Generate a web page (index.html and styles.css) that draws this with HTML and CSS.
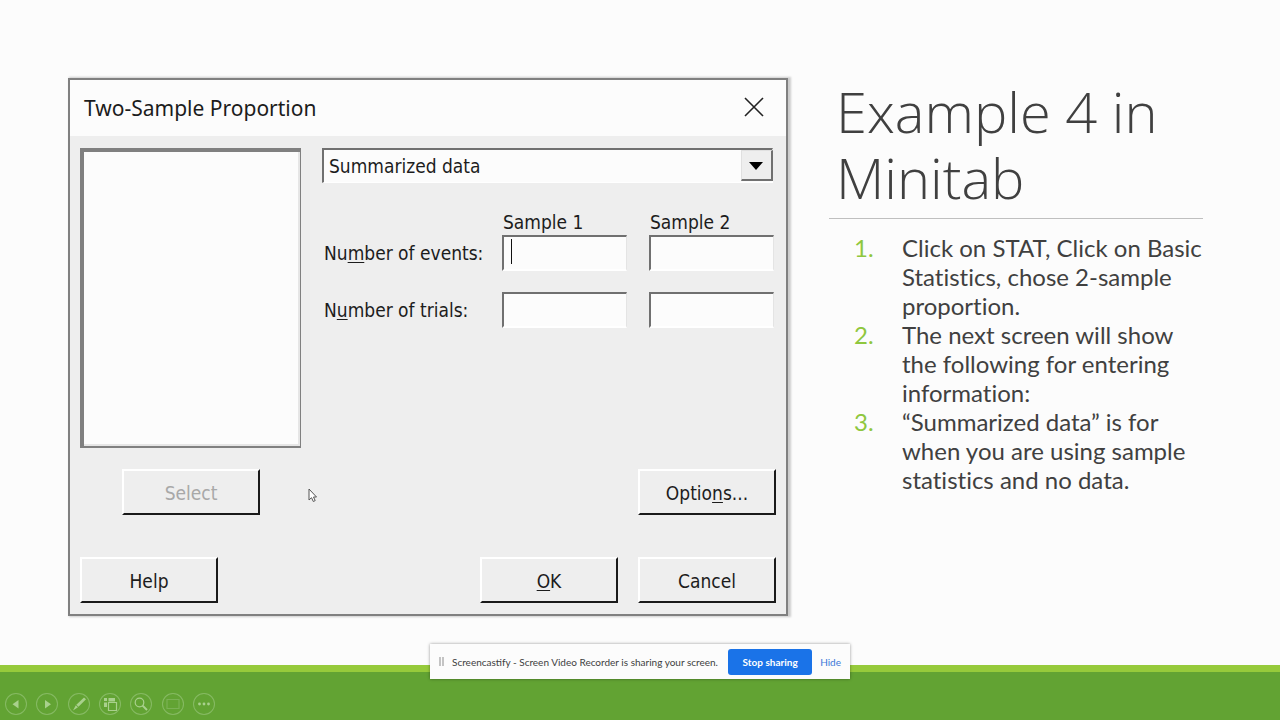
FILE: index.html
```html
<!DOCTYPE html>
<html lang="en">
<head>
<meta charset="utf-8">
<meta name="viewport" content="width=device-width, initial-scale=1">
<title>Example 4 in Minitab</title>
<link rel="stylesheet" href="styles.css">
</head>
<body>
<main class="slide">
  <section class="dialog" aria-labelledby="dialog-title">
    <header class="titlebar">
      <h2 class="dialog-title" id="dialog-title">Two-Sample Proportion</h2>
      <button class="close" type="button" aria-label="Close">
        <svg width="20" height="20" viewBox="0 0 20 20" fill="none" stroke="#222" stroke-width="1.6"><path d="M1 1 19 19M19 1 1 19"/></svg>
      </button>
    </header>
    <form class="dialog-body">
      <div class="fields">
        <div class="listbox" role="listbox" aria-label="Columns"></div>
        <div class="settings">
          <div class="combo">
            <select class="combo-select" aria-label="Data format"><option>Summarized data</option></select>
            <span class="combo-arrow"><svg width="14" height="8" viewBox="0 0 14 8"><path d="M0 0H14L7 8Z" fill="#000"/></svg></span>
          </div>
          <div class="samples">
            <span></span>
            <span class="head" id="s1">Sample 1</span>
            <span class="head" id="s2">Sample 2</span>
            <label for="events1" id="events">Nu<u>m</u>ber of events:</label>
            <span class="cell"><input class="box" id="events1" type="text" aria-labelledby="events s1"><i class="caret"></i></span>
            <input class="box" type="text" aria-labelledby="events s2">
            <label for="trials1" id="trials">N<u>u</u>mber of trials:</label>
            <input class="box" id="trials1" type="text" aria-labelledby="trials s1">
            <input class="box" type="text" aria-labelledby="trials s2">
          </div>
        </div>
      </div>
      <div class="row row-options">
        <button class="btn" type="button" disabled>Select</button>
        <button class="btn push" type="button">Optio<u>n</u>s...</button>
      </div>
      <div class="row">
        <button class="btn" type="button">Help</button>
        <button class="btn push" type="button"><u>O</u>K</button>
        <button class="btn" type="button">Cancel</button>
      </div>
    </form>
    <svg class="pointer" width="10" height="15" viewBox="0 0 10 15"><path d="M1 1V12L3.500 9.700 5.300 13.500 7.200 12.600 5.500 9H8.500Z" fill="#fff" stroke="#555" stroke-width="1"/></svg>
  </section>
  <section class="notes">
    <h1 class="heading">Example 4 in Minitab</h1>
    <ol class="steps">
      <li>Click on STAT, Click on Basic Statistics, chose 2-sample proportion.</li>
      <li>The next screen will show the following for entering information:</li>
      <li>“Summarized data” is for when you are using sample statistics and no data.</li>
    </ol>
  </section>
</main>
<footer class="band">
  <nav class="controls" aria-label="Slide show">
    <button class="ctl" type="button" aria-label="Previous"><svg viewBox="0 0 22 22"><path class="solid" d="M13.500 7V15.500L7.500 11.200Z"/></svg></button>
    <button class="ctl" type="button" aria-label="Next"><svg viewBox="0 0 22 22"><path class="solid" d="M9 7V15.500L15 11.200Z"/></svg></button>
    <button class="ctl" type="button" aria-label="Pen"><svg viewBox="0 0 22 22"><path class="solid" d="M16 4.500 18 6.200 10.500 13.800 8.300 11.800ZM7.800 12.300 10 14.300 5 17.500Z"/></svg></button>
    <button class="ctl" type="button" aria-label="All slides"><svg viewBox="0 0 22 22"><path class="solid" d="M5 5H8V8H5ZM9.500 5H16V8.500H9.500ZM5 9.500H8V14H5Z"/><path class="line" d="M9.500 9.500H17.500V17.500H9.500Z"/></svg></button>
    <button class="ctl" type="button" aria-label="Zoom"><svg viewBox="0 0 22 22"><circle class="line" cx="9.500" cy="9.500" r="4.300"/><path class="line thick" d="M12.600 12.600 17 17"/></svg></button>
    <button class="ctl dim" type="button" aria-label="Subtitles"><svg viewBox="0 0 22 22"><path class="line" d="M5 6.500H17V15.500H5Z"/></svg></button>
    <button class="ctl" type="button" aria-label="More"><svg viewBox="0 0 22 22"><circle class="solid" cx="6.500" cy="11" r="1.400"/><circle class="solid" cx="11" cy="11" r="1.400"/><circle class="solid" cx="15.500" cy="11" r="1.400"/></svg></button>
  </nav>
</footer>
<aside class="share">
  <span class="grip"></span>
  <span class="share-text">Screencastify - Screen Video Recorder is sharing your screen.</span>
  <button class="stop" type="button">Stop sharing</button>
  <a class="hide" href="#">Hide</a>
</aside>
</body>
</html>
```
FILE: styles.css
```css
* { box-sizing: border-box; }
body {
  margin: 0;
  min-height: 100vh;
  display: flex;
  flex-direction: column;
  position: relative;
  background: #fcfcfc;
  color: #404040;
  font-family: "Noto Sans", sans-serif;
}
.slide {
  flex: 1;
  display: grid;
  grid-template-columns: minmax(0, 720fr) minmax(0, 374fr);
  gap: 41px;
  align-items: start;
  padding: 78px 77px 40px 68px;
}
.dialog {
  position: relative;
  background: #eee;
  border: 2px solid #808080;
  box-shadow: 2px 0 2px 1px #ccc;
  color: #1c1c1c;
  font: 19px/28px "DejaVu Sans Condensed", "DejaVu Sans", sans-serif;
}
.dialog button, .dialog input, .dialog select { font: inherit; }
.titlebar {
  display: flex;
  align-items: center;
  justify-content: space-between;
  height: 56px;
  padding: 0 22px 0 14px;
  background: #fcfcfc;
}
.dialog-title {
  margin: 0;
  font: 400 21px/28px "Noto Sans", sans-serif;
}
.close {
  display: flex;
  padding: 0 0 2px;
  border: 0;
  background: none;
}
.dialog-body { padding: 12px 10px 11px; }
.fields {
  display: grid;
  grid-template-columns: 221px minmax(0, 1fr);
  gap: 21px;
  padding-right: 2px;
}
.listbox {
  height: 300px;
  background: #fcfcfc;
  border: solid #808080;
  border-width: 4px 1px 2px 4px;
  box-shadow: inset -2px -2px #e6e6e6;
}
.combo {
  position: relative;
  display: flex;
  padding-right: 1px;
}
.combo-select {
  appearance: none;
  width: 100%;
  height: 35px;
  padding: 0 36px 0 5px;
  border: solid;
  border-width: 2px 1px 1px 2px;
  border-color: #707070 #fff #fff #707070;
  border-radius: 0;
  background: #fcfcfc;
  color: #1c1c1c;
}
.combo-arrow {
  position: absolute;
  top: 2px;
  right: 1px;
  display: flex;
  align-items: center;
  justify-content: center;
  width: 32px;
  height: 31px;
  padding: 2px 2px 0 0;
  background: #eee;
  border: solid;
  border-width: 1px 2px 2px 1px;
  border-color: #e0e0e0 #707070 #707070 #e0e0e0;
  pointer-events: none;
}
.samples {
  display: grid;
  grid-template-columns: minmax(0, 1fr) 125px 125px;
  grid-template-rows: 26px 36px 78px;
  column-gap: 22px;
  align-items: center;
  padding: 26px 0 0 2px;
}
.samples label { white-space: nowrap; }
.head { padding-left: 1px; }
.cell {
  position: relative;
  display: flex;
}
.box {
  width: 100%;
  height: 36px;
  padding: 0 8px;
  border: solid;
  border-width: 2px 1px 2px 2px;
  border-color: #707070 #e4e4e4 #fff #707070;
  background: #fcfcfc;
}
.caret {
  position: absolute;
  left: 9px;
  top: 4px;
  width: 1px;
  height: 25px;
  background: #111;
}
.row {
  display: flex;
  gap: 20px;
}
.row-options {
  padding: 21px 0 42px 42px;
}
.push { margin-left: auto; }
.btn {
  width: 138px;
  height: 46px;
  padding: 2px 0 0;
  border: solid;
  border-width: 2px;
  border-color: #fff #1a1a1a #1a1a1a #fff;
  background: #eee;
  color: #1c1c1c;
}
.btn:disabled { color: #a8a8a8; }
u { text-underline-offset: 2px; text-decoration-skip-ink: none; }
.pointer {
  position: absolute;
  left: 238px;
  top: 408px;
}
.heading {
  margin: 0;
  padding: 0 0 8px 7px;
  border-bottom: 1px solid #bfbfbf;
  font: 300 56px/66px "Open Sans", sans-serif;
}
.steps {
  margin: 0;
  padding: 14px 0 0 73px;
  font: 24px/29px Lato, sans-serif;
  font-variant-ligatures: none;
  list-style: none;
  counter-reset: step;
}
.steps li { position: relative; counter-increment: step; }
.steps li::before {
  position: absolute;
  left: -48px;
  content: counter(step) ".";
  color: #8fc73e;
}
.band {
  display: flex;
  align-items: flex-end;
  height: 55px;
  padding: 0 5px 5px;
  border-top: 7px solid #96ca3b;
  background: #62a333;
}
.controls {
  display: flex;
  justify-content: space-between;
  width: 210px;
}
.ctl {
  width: 22px;
  height: 22px;
  padding: 0;
  border: 0;
  border-radius: 50%;
  box-shadow: inset 0 0 0 1px #86ba63;
  background: none;
}
.ctl svg { display: block; width: 22px; height: 22px; }
.solid { fill: #a9d08d; }
.line { fill: none; stroke: #a9d08d; stroke-width: 1.2; }
.thick { stroke-width: 2; }
.dim .line { stroke: #7ab254; }
.share {
  position: absolute;
  left: 50%;
  bottom: 41px;
  transform: translateX(-50%);
  display: flex;
  align-items: center;
  width: 420px;
  height: 35px;
  padding: 0 9px;
  background: #fcfcfc;
  box-shadow: 0 0 3px #00000066;
  font: 10px/14px Lato, sans-serif;
  white-space: nowrap;
}
.grip {
  width: 5px;
  height: 9px;
  margin-right: 8px;
  border: solid #c4c4c4;
  border-width: 0 2px;
}
.stop {
  width: 84px;
  height: 26px;
  margin: 0 8px 0 auto;
  padding: 0;
  border: 0;
  border-radius: 3px;
  background: #1a73e8;
  color: #fff;
  font: 700 10px/14px Lato, sans-serif;
}
.hide { color: #3b78d8; text-decoration: none; }
```
